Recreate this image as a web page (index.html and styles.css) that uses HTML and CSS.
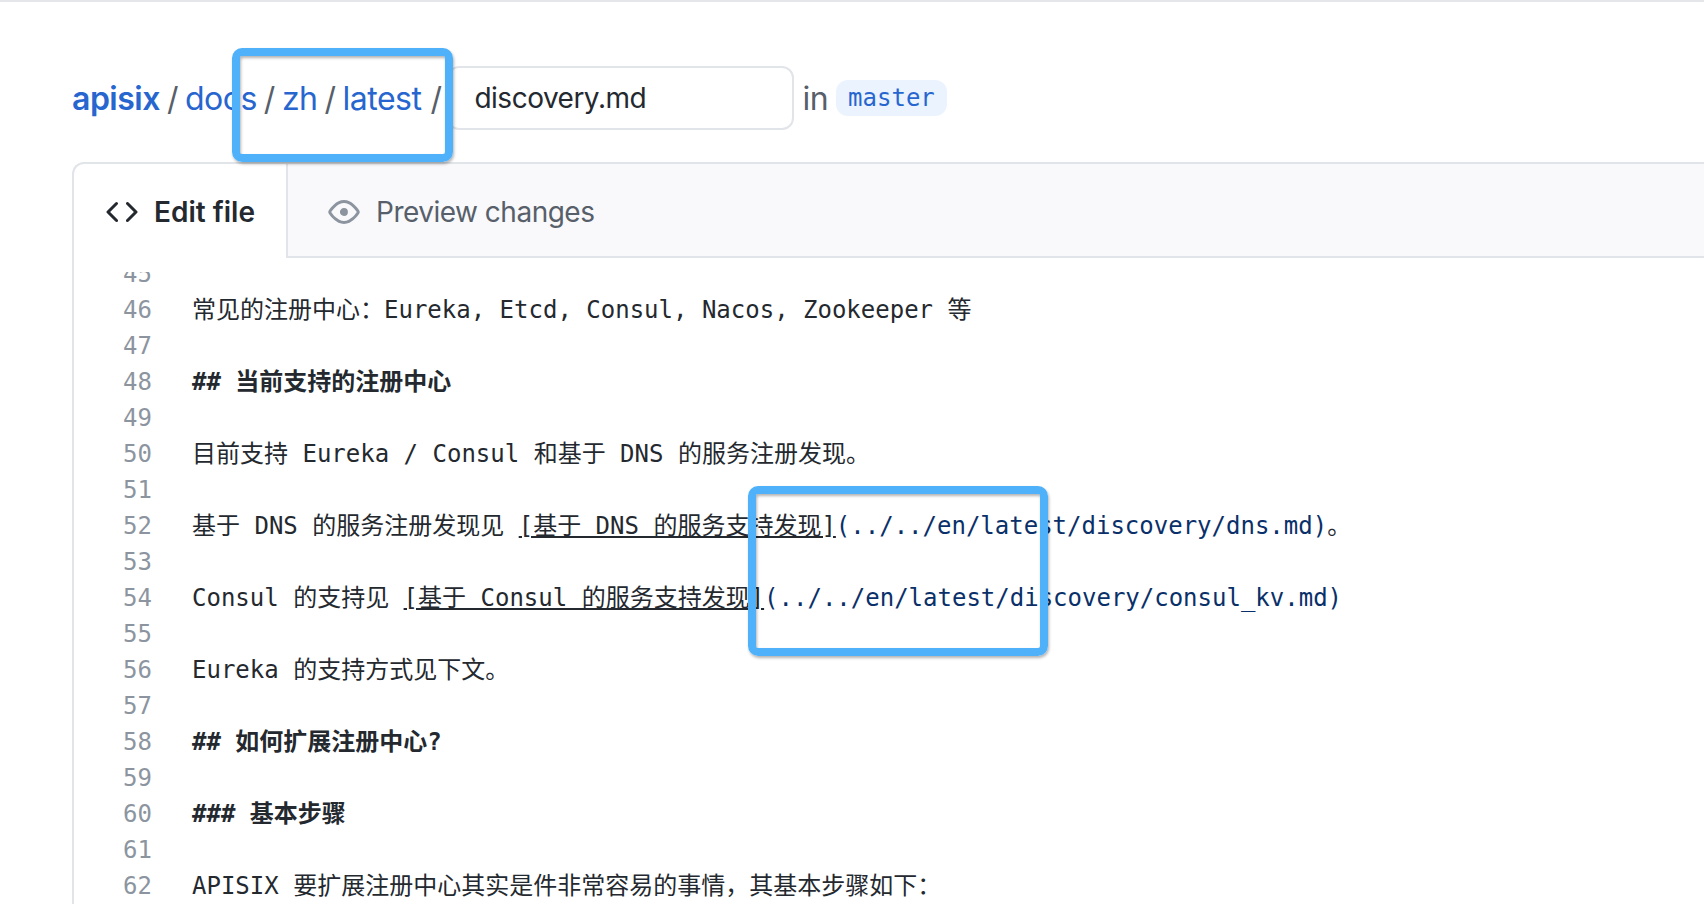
FILE: index.html
```html
<!DOCTYPE html>
<html lang="zh-CN">
<head>
<meta charset="utf-8">
<title>Editing discovery.md</title>
<link rel="stylesheet" href="styles.css">
</head>
<body>
<div class="page">
  <div class="crumbs">
    <a class="crumb strong" href="#">apisix</a><span class="sep">/</span>
    <a class="crumb" href="#">docs</a><span class="sep">/</span>
    <a class="crumb" href="#">zh</a><span class="sep">/</span>
    <a class="crumb" href="#">latest</a><span class="sep last">/</span>
    <div class="filename">discovery.md</div>
    <span class="in">in</span>
    <span class="branch">master</span>
  </div>
  <div class="editor">
    <div class="tabs">
      <div class="tab tab-active">
        <svg class="icon" viewBox="0 0 16 16" width="32" height="32"><path d="m11.28 3.22 4.25 4.25a.75.75 0 0 1 0 1.06l-4.25 4.25a.749.749 0 0 1-1.275-.326.749.749 0 0 1 .215-.734L13.94 8l-3.72-3.72a.749.749 0 0 1 .326-1.275.749.749 0 0 1 .734.215Zm-6.56 0a.751.751 0 0 1 1.042.018.751.751 0 0 1 .018 1.042L2.06 8l3.72 3.72a.749.749 0 0 1-.326 1.275.749.749 0 0 1-.734-.215L.47 8.53a.75.75 0 0 1 0-1.06Z"/></svg>
        <span>Edit file</span>
      </div>
      <div class="tab tab-rest">
        <svg class="icon eye" viewBox="0 0 16 16" width="32" height="32"><path d="M8 2c1.981 0 3.671.992 4.933 2.078 1.27 1.091 2.187 2.345 2.637 3.023a1.62 1.62 0 0 1 0 1.798c-.45.678-1.367 1.932-2.637 3.023C11.67 13.008 9.981 14 8 14c-1.981 0-3.671-.992-4.933-2.078C1.797 10.83.88 9.576.43 8.898a1.62 1.62 0 0 1 0-1.798c.45-.677 1.367-1.931 2.637-3.022C4.33 2.992 6.019 2 8 2ZM1.679 7.932a.12.12 0 0 0 0 .136c.411.622 1.241 1.75 2.366 2.717C5.176 11.758 6.527 12.5 8 12.5c1.473 0 2.825-.742 3.955-1.715 1.124-.967 1.954-2.096 2.366-2.717a.12.12 0 0 0 0-.136c-.412-.621-1.242-1.75-2.366-2.717C10.824 4.242 9.473 3.5 8 3.5c-1.473 0-2.825.742-3.955 1.715-1.124.967-1.954 2.096-2.366 2.717ZM8 10a2 2 0 1 1-.001-3.999A2 2 0 0 1 8 10Z"/></svg>
        <span>Preview changes</span>
      </div>
    </div>
    <div class="viewport">
      <div class="lines">
        <div class="line"><span class="num">45</span><span class="code"></span></div>
        <div class="line"><span class="num">46</span><span class="code">常见的注册中心：Eureka, Etcd, Consul, Nacos, Zookeeper 等</span></div>
        <div class="line"><span class="num">47</span><span class="code"></span></div>
        <div class="line"><span class="num">48</span><span class="code bold">## 当前支持的注册中心</span></div>
        <div class="line"><span class="num">49</span><span class="code"></span></div>
        <div class="line"><span class="num">50</span><span class="code">目前支持 Eureka / Consul 和基于 DNS 的服务注册发现。</span></div>
        <div class="line"><span class="num">51</span><span class="code"></span></div>
        <div class="line"><span class="num">52</span><span class="code">基于 DNS 的服务注册发现见 <span class="link">[基于 DNS 的服务支持发现]</span><span class="url">(../../en/latest/discovery/dns.md)</span>。</span></div>
        <div class="line"><span class="num">53</span><span class="code"></span></div>
        <div class="line"><span class="num">54</span><span class="code">Consul 的支持见 <span class="link">[基于 Consul 的服务支持发现]</span><span class="url">(../../en/latest/discovery/consul_kv.md)</span></span></div>
        <div class="line"><span class="num">55</span><span class="code"></span></div>
        <div class="line"><span class="num">56</span><span class="code">Eureka 的支持方式见下文。</span></div>
        <div class="line"><span class="num">57</span><span class="code"></span></div>
        <div class="line"><span class="num">58</span><span class="code bold">## 如何扩展注册中心?</span></div>
        <div class="line"><span class="num">59</span><span class="code"></span></div>
        <div class="line"><span class="num">60</span><span class="code bold">### 基本步骤</span></div>
        <div class="line"><span class="num">61</span><span class="code"></span></div>
        <div class="line"><span class="num">62</span><span class="code">APISIX 要扩展注册中心其实是件非常容易的事情，其基本步骤如下：</span></div>
      </div>
    </div>
  </div>
  <div class="callout callout-path"></div>
  <div class="callout callout-links"></div>
</div>
</body>
</html>
```

FILE: styles.css
```css
* { box-sizing: border-box; }
html, body { margin: 0; padding: 0; background: #fff; }
.page {
  position: relative;
  display: flex;
  flex-direction: column;
  width: 100%;
  height: 100vh;
  overflow: hidden;
  border-top: 2px solid #e5e6ea;
  font-family: Inter, "Noto Sans", sans-serif;
  color: #24292f;
}
.crumbs {
  display: flex;
  align-items: center;
  height: 64px;
  margin: 64px 0 32px 72px;
  font-size: 32px;
  letter-spacing: -0.5px;
  white-space: nowrap;
}
.crumb { color: #2766cf; text-decoration: none; }
.crumb.strong { font-weight: 600; }
.sep { color: #57606a; margin: 0 7px; }
.sep.last { margin-left: 9px; margin-right: 6px; }
.filename {
  width: 347px;
  height: 64px;
  padding: 0 25px;
  border: 2px solid #e1e4e8;
  border-radius: 12px;
  font-size: 28px;
  line-height: 61px;
}
.in { margin-left: 8px; color: #57606a; font-size: 32px; }
.branch {
  margin-left: 8px;
  padding: 0 12px;
  height: 36px;
  line-height: 37px;
  border-radius: 12px;
  background: #eaf3fe;
  color: #2766cf;
  font-family: "DejaVu Sans Mono", monospace;
  font-size: 24px;
  letter-spacing: 0;
}
.editor {
  flex: 1;
  min-height: 0;
  margin-left: 72px;
  border-left: 2px solid #e1e4e8;
  border-top: 2px solid #e1e4e8;
  border-top-left-radius: 12px;
  display: flex;
  flex-direction: column;
}
.tabs { display: flex; height: 94px; flex: none; }
.tab { display: flex; align-items: center; font-size: 28px; padding-top: 2px; }
.tab-active {
  width: 214px;
  padding-left: 32px;
  gap: 16px;
  font-weight: 600;
  border-right: 2px solid #e1e4e8;
}
.tab-rest {
  flex: 1;
  padding-left: 40px;
  padding-top: 4px;
  gap: 16px;
  background: #f9f9fb;
  border-bottom: 2px solid #e1e4e8;
  color: #57606a;
  letter-spacing: -0.5px;
}
.icon { fill: #24292f; display: block; flex: none; }
.eye { fill: #8c959f; }
.viewport { flex: 1; min-height: 0; overflow: hidden; margin-top: 14px; }
.lines { margin-top: -16px; }
.line {
  display: flex;
  height: 36px;
  line-height: 36px;
  font-family: "DejaVu Sans Mono", "Noto Sans CJK SC", monospace;
  font-size: 24px;
  white-space: pre;
}
.num { width: 78px; text-align: right; color: #8c959f; flex: none; }
.code { margin-left: 40px; color: #24292f; }
.bold { font-weight: 700; }
.link { text-decoration: underline; }
.url { color: #0a3069; }
.callout {
  position: absolute;
  border: 8px solid #4fb1f9;
  border-radius: 10px;
  box-shadow: 1px 2px 3px rgba(0, 0, 0, 0.3), inset 1px 2px 3px rgba(0, 0, 0, 0.3);
}
.callout-path { left: 232px; top: 46px; width: 221px; height: 114px; }
.callout-links { left: 748px; top: 484px; width: 300px; height: 170px; }
```
